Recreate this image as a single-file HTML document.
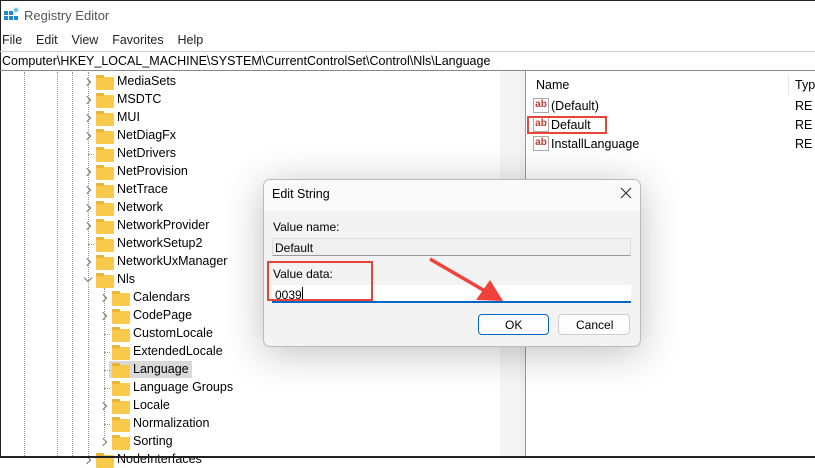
<!DOCTYPE html>
<html><head><style>
*{margin:0;padding:0;box-sizing:border-box}
body{width:815px;height:458px;overflow:hidden;background:#fff;font-family:"Liberation Sans",Arial,sans-serif;position:relative;color:#000}
.a{position:absolute}
.t{font-size:12.5px;white-space:nowrap}
.f{position:absolute;width:18px;height:13px;background:#f8c94a;border-radius:1px}
.f:before{content:"";position:absolute;left:0;top:-2px;width:8px;height:3px;background:#e9b334;border-radius:1px 1px 0 0}
.ch{position:absolute;width:6px;height:6px;border-right:1.3px solid #777;border-bottom:1.3px solid #777;transform:rotate(-45deg)}
.ab{position:absolute;width:16px;height:15px;border:1px solid #aaa;background:#fff;color:#c83a2a;font-size:10px;font-weight:bold;line-height:12px;text-align:center}
.dot{position:absolute;border-left:1px dotted #999}
</style></head><body>
<div class="a" style="left:0;top:0;width:815px;height:1px;background:#222"></div>
<div class="a" style="left:0;top:0;width:1px;height:458px;background:#222"></div>
<svg class="a" style="left:3px;top:6px" width="18" height="18"><rect x="1" y="5" width="4" height="4" fill="#1e88d8"/><rect x="6" y="5" width="4" height="4" fill="#1e88d8"/><rect x="1" y="10" width="4" height="4" fill="#1e88d8"/><rect x="6" y="10" width="4" height="4" fill="#1e88d8"/><rect x="11" y="10" width="4" height="4" fill="#1e88d8"/><rect x="11" y="2" width="4" height="4" fill="#6cc4f0" transform="rotate(45 13 4)"/></svg>
<div class="a t" style="left:24px;top:8px;font-size:13px;color:#555">Registry Editor</div>
<div class="a t" style="left:2px;top:33px;font-size:12.5px;color:#222">File&nbsp;&nbsp;&nbsp; Edit&nbsp;&nbsp;&nbsp; View&nbsp;&nbsp;&nbsp; Favorites&nbsp;&nbsp;&nbsp; Help</div>
<div class="a" style="left:0;top:51px;width:815px;height:20px;border-top:1px solid #ccc;border-bottom:1px solid #888"></div>
<div class="a t" style="left:2px;top:54px;font-size:12.5px">Computer\HKEY_LOCAL_MACHINE\SYSTEM\CurrentControlSet\Control\Nls\Language</div>
<div class="dot" style="left:24px;top:72px;height:384px"></div>
<div class="dot" style="left:57px;top:72px;height:384px"></div>
<div class="dot" style="left:72px;top:72px;height:384px"></div>
<div class="dot" style="left:88px;top:72px;height:384px"></div>
<div class="dot" style="left:104px;top:288px;height:150px"></div>
<div class="a" style="left:109px;top:361px;width:83px;height:17px;background:#d9d9d9"></div>
<div id="tree"></div>
<div class="a" style="left:520px;top:71px;width:6px;height:385px;background:#f0f0f0;border-right:1px solid #999"></div>
<div class="a" style="left:500px;top:71px;width:20px;height:385px;background:#f5f5f5"></div>
<div class="a" style="left:788px;top:75px;width:1px;height:20px;background:#e5e5e5"></div>
<div class="a t" style="left:536px;top:78px">Name</div>
<div class="a t" style="left:795px;top:78px">Typ</div>
<div class="ab" style="left:533px;top:98px">ab</div><div class="a t" style="left:551px;top:99px">(Default)</div><div class="a t" style="left:795px;top:99px">RE</div>
<div class="ab" style="left:533px;top:117px">ab</div><div class="a t" style="left:551px;top:118px">Default</div><div class="a t" style="left:795px;top:118px">RE</div>
<div class="ab" style="left:533px;top:136px">ab</div><div class="a t" style="left:551px;top:137px">InstallLanguage</div><div class="a t" style="left:795px;top:137px">RE</div>
<div class="a" style="left:527px;top:116px;width:80px;height:18px;border:2px solid #e8443a"></div>
<div class="a" style="left:0;top:456px;width:815px;height:2px;background:#222"></div>
<div class="a" style="left:263px;top:179px;width:378px;height:168px;background:#f3f3f3;border:1px solid #bbb;border-radius:7px;box-shadow:0 6px 40px rgba(0,0,0,.25);overflow:hidden">
<div style="height:31px;background:#fafafa"></div>
</div>
<div class="a t" style="left:272px;top:187px;font-size:12.5px">Edit String</div>
<svg class="a" style="left:620px;top:187px" width="12" height="12"><path d="M1 1L11 11M11 1L1 11" stroke="#333" stroke-width="1.2"/></svg>
<div class="a t" style="left:273px;top:220px;font-size:12px">Value name:</div>
<div class="a" style="left:272px;top:238px;width:359px;height:18px;background:#f0f0f0;border:1px solid #ddd;border-bottom-color:#999"></div>
<div class="a t" style="left:275px;top:241px;font-size:12px">Default</div>
<div class="a t" style="left:273px;top:267px;font-size:12px">Value data:</div>
<div class="a" style="left:272px;top:285px;width:359px;height:18px;background:#fff;border-bottom:2px solid #0567c4"></div>
<div class="a t" style="left:275px;top:288px;font-size:12px">0039</div>
<div class="a" style="left:302px;top:287px;width:1px;height:13px;background:#000"></div>
<div class="a" style="left:478px;top:314px;width:71px;height:21px;background:#fdfdfd;border:1px solid #0567c4;border-radius:4px"></div>
<div class="a t" style="left:505px;top:318px;font-size:12px">OK</div>
<div class="a" style="left:558px;top:314px;width:72px;height:21px;background:#fdfdfd;border:1px solid #ccc;border-radius:4px"></div>
<div class="a t" style="left:576px;top:318px;font-size:12px">Cancel</div>
<div class="a" style="left:267px;top:261px;width:106px;height:40px;border:2px solid #e8443a"></div>
<svg class="a" style="left:0;top:0" width="815" height="458"><path d="M430 259L485 291" stroke="#f0413a" stroke-width="3.5"/><polygon points="503,301 476,300 490,280" fill="#f0413a"/></svg>
<script>
var rows=[["MediaSets",1,1],["MSDTC",1,1],["MUI",1,1],["NetDiagFx",1,1],["NetDrivers",1,0],["NetProvision",1,1],["NetTrace",1,1],["Network",1,1],["NetworkProvider",1,1],["NetworkSetup2",1,0],["NetworkUxManager",1,1],["Nls",1,2],["Calendars",2,1],["CodePage",2,1],["CustomLocale",2,0],["ExtendedLocale",2,0],["Language",2,0],["Language Groups",2,0],["Locale",2,1],["Normalization",2,0],["Sorting",2,1],["NodeInterfaces",1,1]];
var h="";rows.forEach(function(r,i){var y=82+i*18;var x=r[1]==1?88:104;
if(r[2]==1)h+='<div class="ch" style="left:'+(x-4)+'px;top:'+(y-3)+'px"></div>';
else if(r[2]==2)h+='<div class="ch" style="left:'+(x-3)+'px;top:'+(y-5)+'px;transform:rotate(45deg)"></div>';
else h+='<div class="a" style="left:'+x+'px;top:'+y+'px;width:6px;border-top:1px dotted #999"></div>';
h+='<div class="f" style="left:'+(x+8)+'px;top:'+(y-5)+'px"></div><div class="a t" style="left:'+(x+29)+'px;top:'+(y-8)+'px">'+r[0]+'</div>';});
document.getElementById("tree").innerHTML=h;
</script>
</body></html>
